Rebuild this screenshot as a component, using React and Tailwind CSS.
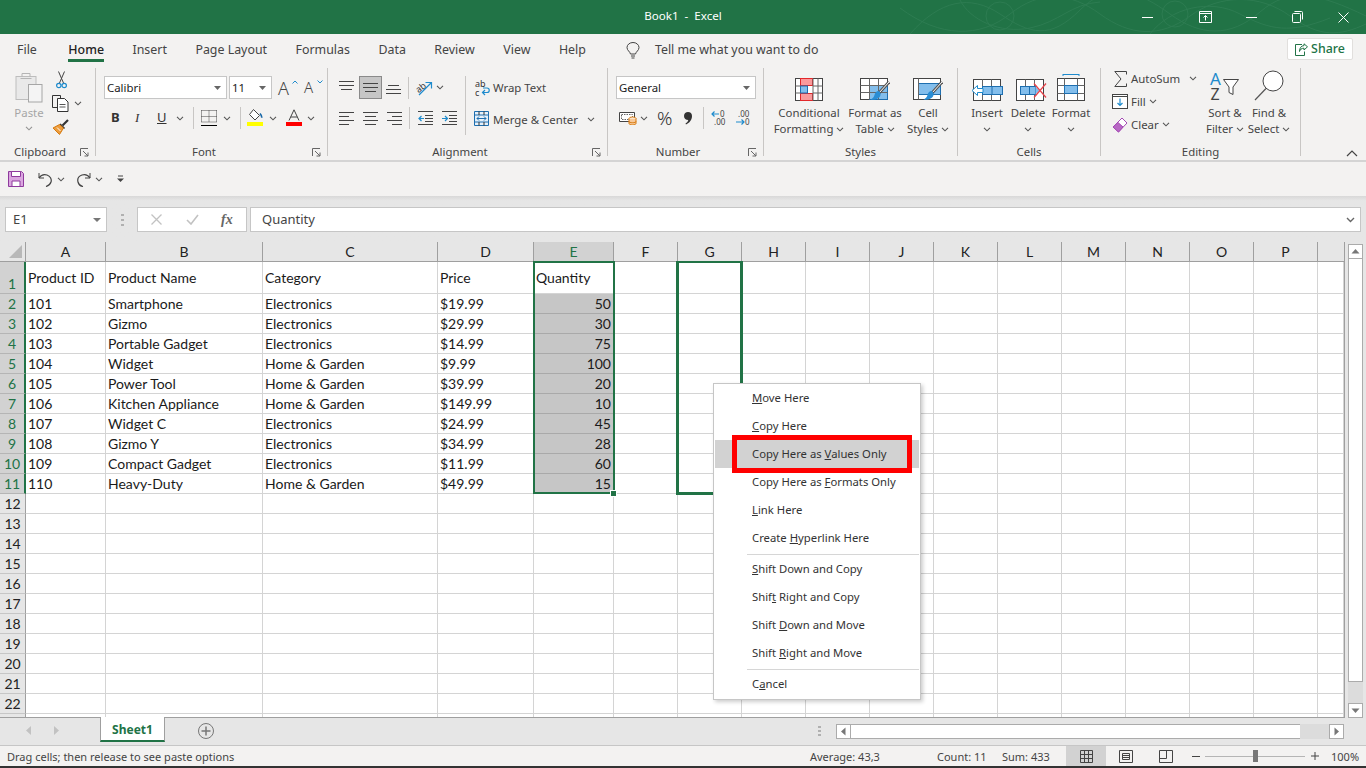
import React from "react";

const DARK = "#444444";
const BLUE = "#1e8bcd";

const tabs = ["File", "Home", "Insert", "Page Layout", "Formulas", "Data", "Review", "View", "Help"];
const columns = ["A", "B", "C", "D", "E", "F", "G", "H", "I", "J", "K", "L", "M", "N", "O", "P", ""];
const gridCols =
  "grid grid-cols-[26px_80px_157px_175px_96px_80px_64px_64px_64px_64px_64px_64px_64px_64px_64px_64px_64px_26px]";

const data = [
  ["Product ID", "Product Name", "Category", "Price", "Quantity"],
  ["101", "Smartphone", "Electronics", "$19.99", "50"],
  ["102", "Gizmo", "Electronics", "$29.99", "30"],
  ["103", "Portable Gadget", "Electronics", "$14.99", "75"],
  ["104", "Widget", "Home & Garden", "$9.99", "100"],
  ["105", "Power Tool", "Home & Garden", "$39.99", "20"],
  ["106", "Kitchen Appliance", "Home & Garden", "$149.99", "10"],
  ["107", "Widget C", "Electronics", "$24.99", "45"],
  ["108", "Gizmo Y", "Electronics", "$34.99", "28"],
  ["109", "Compact Gadget", "Electronics", "$11.99", "60"],
  ["110", "Heavy-Duty", "Home & Garden", "$49.99", "15"],
];

const menuTop = [
  ["", "M", "ove Here"],
  ["", "C", "opy Here"],
  ["Copy Here as ", "V", "alues Only"],
  ["Copy Here as ", "F", "ormats Only"],
  ["", "L", "ink Here"],
  ["Create ", "H", "yperlink Here"],
];
const menuShift = [
  ["", "S", "hift Down and Copy"],
  ["Shif", "t", " Right and Copy"],
  ["Shift ", "D", "own and Move"],
  ["Shift ", "R", "ight and Move"],
];

function Chev({ className = "" }) {
  return (
    <svg width="8" height="5" viewBox="0 0 8 5" className={`shrink-0 ${className}`}>
      <path d="M1 .8l3 3 3-3" fill="none" stroke="#555" strokeWidth="1.1" />
    </svg>
  );
}

function Launcher() {
  return (
    <div className="w-[15px] shrink-0 flex items-center">
      <svg width="9" height="9" viewBox="0 0 9 9">
        <path d="M.5 8V.5H8M3 3l5 5M8 4.5V8H4.5" fill="none" stroke="#666" />
      </svg>
    </div>
  );
}

function GroupLabel({ children, launcher }) {
  return (
    <div className="h-[16px] flex items-center text-[11.4px] text-[#444]">
      <div className="flex-1 text-center leading-[16px]">{children}</div>
      {launcher && <Launcher />}
    </div>
  );
}

function VSep({ className = "" }) {
  return <div className={`w-px h-[22px] bg-[#c8c6c4] shrink-0 ${className}`} />;
}

function Lines({ rows, color = DARK }) {
  return (
    <svg width="15" height="15" viewBox="0 0 15 15" className="shrink-0">
      {rows.map((r, i) => (
        <path key={i} d={`M${r[0]} ${r[2] + 0.5}H${r[1]}`} stroke={color} />
      ))}
    </svg>
  );
}

function Indent({ flip }) {
  return (
    <svg width="15" height="14" viewBox="0 0 15 14" className="shrink-0">
      <path d="M0 .5h15M0 13.5h15M7 4.5h8M7 7.5h8M7 10.5h8" stroke={DARK} />
      <path
        d={flip ? "M0 7.5h5M3 5l2.5 2.5L3 10" : "M6 7.5H1M3.5 5L1 7.5 3.5 10"}
        fill="none"
        stroke={BLUE}
        strokeWidth="1.2"
      />
    </svg>
  );
}

function PasteIcon() {
  return (
    <svg width="28" height="31" viewBox="0 0 28 31">
      <rect x="1" y="4.5" width="20" height="23" fill="#e9e9e9" stroke="#bdbdbd" />
      <path d="M7 4.5V1.5h8v3M5.5 6.5h11" fill="none" stroke="#b5b5b5" />
      <rect x="13.5" y="12.5" width="13.5" height="17.5" fill="#f4f4f4" stroke="#a6a6a6" />
    </svg>
  );
}

function ScissorsIcon() {
  return (
    <svg width="11" height="18" viewBox="0 0 11 18">
      <path d="M2.5 .5L7.5 12M8.5 .5L3.5 12" fill="none" stroke={DARK} />
      <circle cx="2.8" cy="14.5" r="2.2" fill="none" stroke={BLUE} strokeWidth="1.2" />
      <circle cx="8.2" cy="14.5" r="2.2" fill="none" stroke={BLUE} strokeWidth="1.2" />
    </svg>
  );
}

function CopyIcon() {
  return (
    <svg width="17" height="17" viewBox="0 0 17 17">
      <path d="M5.5 12.5H.5V.5h8v3" fill="none" stroke="#333" />
      <path d="M5.5 3.5h7l3.5 3.5v9.5H5.5z" fill="#fff" stroke="#333" />
      <path d="M7.5 9.5h6M7.5 12h6" stroke="#555" />
    </svg>
  );
}

function PainterIcon() {
  return (
    <svg width="17" height="16" viewBox="0 0 17 16">
      <path d="M16 1l-5.5 5.5" stroke="#333" strokeWidth="2.2" />
      <path d="M8 5l4.5 4.5" stroke="#333" strokeWidth="1.6" />
      <path d="M7.5 5.5L1 9l6.5 6.5L11.5 9z" fill="#ed9c3c" stroke="#d47a10" />
      <path d="M5 8.5l3.5 3.5" stroke="#fff" />
    </svg>
  );
}

function BordersIcon() {
  return (
    <svg width="16" height="16" viewBox="0 0 16 16">
      <path
        d="M.5 .5h15M.5 6.5h15M.5 12h15M.5 .5v12M8 .5v12M15.5 .5v12"
        fill="none"
        stroke="#444"
        strokeDasharray="1 1"
      />
      <path d="M0 15.5h16" stroke="#000" />
    </svg>
  );
}

function FillIcon() {
  return (
    <svg width="16" height="18" viewBox="0 0 16 18">
      <path d="M6.5 .5l6 6-4.5 4.5-5.5-5.5z" fill="#fff" stroke="#444" />
      <path d="M13 4.5c1.4 1.7 2 3 1.6 4.2" fill="none" stroke="#1767a8" strokeWidth="1.6" />
      <rect x="0" y="13" width="16" height="4" fill="#ffff00" />
    </svg>
  );
}

function FontColorIcon() {
  return (
    <svg width="16" height="18" viewBox="0 0 16 18">
      <path d="M3 11.5L8 .8l5 10.7M4.8 8h6.4" fill="none" stroke="#444" />
      <rect x="0" y="13" width="16" height="4" fill="#ff0000" />
    </svg>
  );
}

function OrientationIcon() {
  return (
    <svg width="17" height="16" viewBox="0 0 17 16" className="overflow-visible">
      <text x="0" y="10" fontSize="9" fill="#333" transform="rotate(-38 6 8)" fontFamily="Noto Sans">ab</text>
      <path d="M3 15L15 3M9.5 2.5h6v6" fill="none" stroke={BLUE} strokeWidth="1.2" />
    </svg>
  );
}

function WrapIcon() {
  return (
    <svg width="15" height="16" viewBox="0 0 15 16" className="overflow-visible">
      <text x="0" y="7" fontSize="9" fill="#333" fontFamily="Noto Sans">ab</text>
      <text x="0" y="15.5" fontSize="9" fill="#333" fontFamily="Noto Sans">c</text>
      <path d="M8 12.5h4c3 0 3-4.5 0-4.5H8M10 10l-2.5 2.5 2.5 2.5" fill="none" stroke={BLUE} strokeWidth="1.2" />
    </svg>
  );
}

function MergeIcon() {
  return (
    <svg width="15" height="15" viewBox="0 0 15 15">
      <path d="M.5 .5h14v14H.5zM.5 4h14M.5 11h14" fill="#e5f1fb" stroke="#1e6fb0" />
      <path d="M5 .5V4M10 .5V4M5 11v3.5M10 11v3.5" stroke="#333" />
      <path d="M3 7.5h9M5 5.5l-2 2 2 2M10 5.5l2 2-2 2" fill="none" stroke="#1e6fb0" />
    </svg>
  );
}

function AccountingIcon() {
  return (
    <svg width="18" height="14" viewBox="0 0 18 14">
      <path d="M.5 1.5h15v9H.5z" fill="#fff" stroke="#444" />
      <path d="M2.5 3.5h11v5h-11z" fill="none" stroke="#666" strokeDasharray="1.5 1" />
      <ellipse cx="13.5" cy="7.5" rx="3.5" ry="1.5" fill="#fff" stroke="#d87a0e" />
      <path d="M10 7.5v5c0 1.8 7 1.8 7 0v-5" fill="#f7c99a" stroke="#d87a0e" />
      <path d="M10 10.5c0 1.6 7 1.6 7 0" fill="none" stroke="#d87a0e" />
    </svg>
  );
}

function CommaIcon() {
  return (
    <svg width="8" height="13" viewBox="0 0 8 13">
      <path d="M4 0c2.5 0 4 1.6 4 4 0 3.8-2.5 7-6 8.5L1.5 11.500C3 10.5 4 9.5 4.3 8 1.800 8 0 6.5 0 4 0 1.600 1.800 0 4 0z" fill="#333" />
    </svg>
  );
}

function DecimalIcon({ more }) {
  return (
    <svg width="16" height="16" viewBox="0 0 16 16" className="overflow-visible">
      {more ? (
        <>
          <text x="9" y="7" fontSize="8" fill="#444" fontFamily="Noto Sans">0</text>
          <text x="3" y="15" fontSize="8" fill="#444" fontFamily="Noto Sans">.00</text>
          <path d="M8 4H1M3.5 1.5L1 4l2.5 2.5" fill="none" stroke={BLUE} strokeWidth="1.2" />
        </>
      ) : (
        <>
          <text x="3" y="7" fontSize="8" fill="#444" fontFamily="Noto Sans">.00</text>
          <text x="10" y="15" fontSize="8" fill="#444" fontFamily="Noto Sans">0</text>
          <path d="M1 12h8M6.5 9.5L9 12l-2.500 2.500" fill="none" stroke={BLUE} strokeWidth="1.2" />
        </>
      )}
    </svg>
  );
}

function TableBase({ children, w = 28 }) {
  return (
    <svg width={w} height="23" viewBox={`0 0 ${w} 23`}>
      {children}
    </svg>
  );
}

function CondFormatIcon() {
  return (
    <TableBase>
      <rect x=".5" y=".5" width="27" height="22" fill="#fff" stroke="#444" />
      <rect x="5.5" y=".5" width="12" height="7" fill="#fa9a9c" stroke="#e2272a" />
      <rect x="5.5" y="15.5" width="12" height="7" fill="#fa9a9c" stroke="#e2272a" />
      <rect x="5.5" y="8" width="7" height="7" fill="#83beec" stroke="#1e6fb0" />
      <path d="M.5 8h5M.5 15h5M18 8h9.5M18 15h9.5M18 .5v22M23 .5v22" stroke="#666" />
    </TableBase>
  );
}

function Brush() {
  return (
    <>
      <path d="M29 4L19 15" stroke="#555" strokeWidth="3" />
      <path d="M29 4L19 15" stroke="#fff" strokeWidth="1" />
      <path d="M19 13c-3 0-4 2-4.5 4-.5 2-2 3.5-4 4.5 4 .8 8-.5 9.5-3 .8-1.5 1-3.5-1-5.5z" fill="#2a8dd4" />
    </>
  );
}

function FormatTableIcon() {
  return (
    <TableBase w={30}>
      <rect x=".5" y=".5" width="27" height="21" fill="#fff" stroke="#444" />
      <rect x="9.5" y="7.5" width="18" height="14" fill="#83beec" stroke="#1e6fb0" />
      <path d="M.5 7.5h27M.5 14.5h27M9.5 .5v21M18.5 .5v21" stroke="#666" />
      <Brush />
    </TableBase>
  );
}

function CellStylesIcon() {
  return (
    <TableBase w={30}>
      <rect x=".5" y=".5" width="27" height="21" fill="#fff" stroke="#444" />
      <rect x="5.5" y="5.5" width="22" height="11" fill="#83beec" stroke="#1e6fb0" />
      <path d="M5.5 .5v21" stroke="#666" />
      <Brush />
    </TableBase>
  );
}

function InsertIcon() {
  return (
    <svg width="32" height="22" viewBox="0 0 32 22">
      <rect x="2.5" y=".5" width="27" height="21" fill="#fff" stroke="#444" />
      <path d="M11.5 .5v21M20.5 .5v21" stroke="#666" />
      <rect x="11.5" y="7.5" width="20" height="8" fill="#83beec" stroke="#1e6fb0" />
      <path d="M21 7.5v8" stroke="#1e6fb0" />
      <path d="M12 9.5H6.5V6.5L1 11.5l5.5 5v-3H12z" fill="#fff" stroke={BLUE} />
    </svg>
  );
}

function DeleteIcon() {
  return (
    <svg width="31" height="22" viewBox="0 0 31 22">
      <rect x=".5" y=".5" width="27" height="21" fill="#fff" stroke="#444" />
      <path d="M9.5 .5v21M18.5 .5v21" stroke="#666" />
      <rect x="4.5" y="7.5" width="15" height="8" fill="#83beec" stroke="#1e6fb0" />
      <path d="M13.5 7.5v8" stroke="#1e6fb0" />
      <path d="M19.5 7.5l4 4-4 4z" fill="#83beec" />
      <path d="M18 4.5l12 14M30 4.5l-12 14" stroke="#e8434a" strokeWidth="1.2" />
    </svg>
  );
}

function FormatIcon() {
  return (
    <svg width="28" height="27" viewBox="0 0 28 27">
      <path d="M6 .5h16M6 0v2M22 0v2" stroke={BLUE} />
      <rect x=".5" y="4.5" width="27" height="22" fill="#fff" stroke="#444" />
      <path d="M.5 11.5h27M.5 19.5h27M7.5 4.5v22M20.5 4.5v22" stroke="#666" />
      <rect x="7.5" y="11.5" width="13" height="8" fill="#83beec" stroke="#1e6fb0" />
    </svg>
  );
}

function SigmaIcon() {
  return (
    <svg width="13" height="16" viewBox="0 0 13 16">
      <path d="M12.5 3.5V.5H.8L7 8l-6.2 7.5h11.7v-3" fill="none" stroke="#444" />
    </svg>
  );
}

function FillDownIcon() {
  return (
    <svg width="16" height="15" viewBox="0 0 16 15">
      <rect x=".5" y=".5" width="15" height="14" fill="#fff" stroke="#444" />
      <path d="M.5 2.500h15" stroke="#444" />
      <path d="M8 4.5v7M5.5 9L8 11.5 10.5 9" fill="none" stroke={BLUE} strokeWidth="1.2" />
    </svg>
  );
}

function EraserIcon() {
  return (
    <svg width="16" height="16" viewBox="0 0 16 16">
      <path d="M10 1l5 5-8.5 9L1 10z" fill="#fff" stroke="#a54ab5" />
      <path d="M6 5.5l-5 4.5 5.5 5 4.5-5z" fill="#b768c4" stroke="#a54ab5" />
    </svg>
  );
}

function SortIcon() {
  return (
    <svg width="30" height="30" viewBox="0 0 30 30" className="overflow-visible">
      <text x="0" y="14" fontSize="17" fill={BLUE} fontFamily="Noto Sans">A</text>
      <text x="0.5" y="29" fontSize="16" fill="#444" fontFamily="Noto Sans">Z</text>
      <path d="M13.5 8.5h15L23 16v7.5l-4-2V16z" fill="#fff" stroke="#444" />
    </svg>
  );
}

function FindIcon() {
  return (
    <svg width="30" height="31" viewBox="0 0 30 31">
      <circle cx="19" cy="11" r="10" fill="#fff" stroke="#444" />
      <path d="M12 18.5L1 30" stroke="#555" strokeWidth="1.2" />
    </svg>
  );
}

function BigBtn({ icon, lines, width }) {
  return (
    <div className={`flex flex-col items-center shrink-0 ${width}`}>
      <div className="h-[31px] mt-[4px] flex items-end justify-center">{icon}</div>
      <div className="mt-[4px] h-[16px] leading-[16px] whitespace-nowrap flex items-center">{lines[0]}</div>
      <div className="h-[16px] leading-[16px] whitespace-nowrap flex items-center justify-center">
        {lines[1]}
        <Chev className={lines[1] ? "ml-[3px]" : ""} />
      </div>
    </div>
  );
}

function Combo({ children, width }) {
  return (
    <div className={`h-[23px] bg-white border border-[#c6c6c6] flex items-center justify-between pl-[2px] pr-[5px] text-[11.4px] text-[#222] shrink-0 ${width}`}>
      <span>{children}</span>
      <svg width="7" height="4" viewBox="0 0 7 4">
        <path d="M0 0h7L3.5 4z" fill="#666" />
      </svg>
    </div>
  );
}

function Ribbon() {
  return (
    <div className="h-[96px] flex text-[11.4px] text-[#444] border-b-2 border-[#d4d4d4] bg-[#f3f2f1]">
      {/* Clipboard */}
      <div className="w-[95px] shrink-0 flex flex-col">
        <div className="h-[78px] flex">
          <div className="ml-[15px] w-[28px] pt-[6px] flex flex-col items-center">
            <PasteIcon />
            <div className="mt-[2px] h-[16px] leading-[16px] text-[#a6a6a6]">Paste</div>
            <Chev className="mt-[5px] opacity-60" />
          </div>
          <div className="ml-[9px] pt-[5px] flex flex-col">
            <div className="h-[18px] pl-[4px]"><ScissorsIcon /></div>
            <div className="mt-[6px] h-[17px] flex items-center">
              <CopyIcon />
              <Chev className="ml-[5px]" />
            </div>
            <div className="mt-[7px] h-[16px]"><PainterIcon /></div>
          </div>
        </div>
        <GroupLabel launcher>Clipboard</GroupLabel>
      </div>
      <div className="w-px h-[88px] mt-[2px] bg-[#c8c6c4] shrink-0" />

      {/* Font */}
      <div className="w-[231px] shrink-0 flex flex-col">
        <div className="h-[78px] pt-[10px]">
          <div className="flex items-center h-[23px] pl-[8px]">
            <Combo width="w-[123px]">Calibri</Combo>
            <Combo width="w-[43px] ml-[2px]">11</Combo>
            <div className="ml-[6px] w-[18px] relative text-[18px] font-light text-[#444] leading-none">
              A<svg width="6" height="4" viewBox="0 0 6 4" className="absolute right-[-2px] top-[1px]"><path d="M.5 3.5L3 1l2.5 2.5" fill="none" stroke={BLUE} /></svg>
            </div>
            <div className="ml-[8px] w-[16px] relative text-[15px] font-light text-[#444] leading-none">
              A<svg width="6" height="4" viewBox="0 0 6 4" className="absolute right-[-3px] top-[0px]"><path d="M.5 .5L3 3l2.5-2.5" fill="none" stroke={BLUE} /></svg>
            </div>
          </div>
          <div className="flex items-center h-[22px] mt-[8px] pl-[15px]">
            <span className="w-[9px] font-bold text-[13px] text-[#333]">B</span>
            <span className="ml-[15px] w-[8px] italic text-[13px] text-[#333] [font-family:'Liberation_Serif',serif]">I</span>
            <span className="ml-[14px] w-[10px] underline text-[13px] text-[#333]">U</span>
            <Chev className="ml-[9px]" />
            <VSep className="ml-[9px]" />
            <div className="ml-[7px]"><BordersIcon /></div>
            <Chev className="ml-[6px]" />
            <VSep className="ml-[9px]" />
            <div className="ml-[6px]"><FillIcon /></div>
            <Chev className="ml-[6px]" />
            <div className="ml-[9px]"><FontColorIcon /></div>
            <Chev className="ml-[5px]" />
          </div>
        </div>
        <GroupLabel launcher>Font</GroupLabel>
      </div>
      <div className="w-px h-[88px] mt-[2px] bg-[#c8c6c4] shrink-0" />

      {/* Alignment */}
      <div className="w-[279px] shrink-0 flex flex-col">
        <div className="h-[78px] pt-[10px] flex">
          <div className="pl-[11px] w-[137px]">
            <div className="flex items-center h-[23px]">
              <Lines rows={[[0, 15, 1], [0, 15, 5], [2, 13, 9]]} />
              <div className="ml-[5px] w-[23px] h-[23px] bg-[#c6c6c6] border border-[#8a8a8a] flex items-center justify-center">
                <Lines rows={[[0, 15, 3], [0, 15, 7], [2, 13, 11]]} />
              </div>
              <div className="ml-[4px]"><Lines rows={[[2, 13, 5], [0, 15, 9], [0, 15, 13]]} /></div>
              <VSep className="ml-[7px]" />
              <div className="ml-[7px]"><OrientationIcon /></div>
              <Chev className="ml-[3px]" />
            </div>
            <div className="flex items-center h-[22px] mt-[8px]">
              <Lines rows={[[0, 15, 1], [0, 10, 5], [0, 15, 9], [0, 10, 13]]} />
              <div className="ml-[9px]"><Lines rows={[[0, 15, 1], [2, 13, 5], [0, 15, 9], [2, 13, 13]]} /></div>
              <div className="ml-[9px]"><Lines rows={[[0, 15, 1], [5, 15, 5], [0, 15, 9], [5, 15, 13]]} /></div>
              <VSep className="ml-[7px]" />
              <div className="ml-[8px]"><Indent /></div>
              <div className="ml-[9px]"><Indent flip /></div>
            </div>
          </div>
          <div className="w-px h-[59px] bg-[#c8c6c4] shrink-0" />
          <div className="pl-[8px]">
            <div className="h-[23px] flex items-center pl-[1px]">
              <WrapIcon />
              <span className="ml-[3px] whitespace-nowrap">Wrap Text</span>
            </div>
            <div className="h-[22px] mt-[8px] flex items-center">
              <MergeIcon />
              <span className="ml-[4px] pt-[3px] whitespace-nowrap">Merge &amp; Center</span>
              <Chev className="ml-[9px] mt-[2px]" />
            </div>
          </div>
        </div>
        <GroupLabel launcher>Alignment</GroupLabel>
      </div>
      <div className="w-px h-[88px] mt-[2px] bg-[#c8c6c4] shrink-0" />

      {/* Number */}
      <div className="w-[155px] shrink-0 flex flex-col">
        <div className="h-[78px] pt-[10px]">
          <div className="pl-[8px] h-[23px]">
            <Combo width="w-[140px]">General</Combo>
          </div>
          <div className="flex items-center h-[22px] mt-[8px] pl-[11px]">
            <AccountingIcon />
            <Chev className="ml-[3px]" />
            <span className="ml-[9px] text-[19px] font-light leading-none text-[#333]">%</span>
            <div className="ml-[12px]"><CommaIcon /></div>
            <VSep className="ml-[11px]" />
            <div className="ml-[7px]"><DecimalIcon more /></div>
            <div className="ml-[8px]"><DecimalIcon /></div>
          </div>
        </div>
        <GroupLabel launcher>Number</GroupLabel>
      </div>
      <div className="w-px h-[88px] mt-[2px] bg-[#c8c6c4] shrink-0" />

      {/* Styles */}
      <div className="w-[193px] shrink-0 flex flex-col">
        <div className="h-[78px] flex pl-[10px]">
          <BigBtn width="w-[70px]" icon={<CondFormatIcon />} lines={["Conditional", "Formatting"]} />
          <BigBtn width="w-[62px]" icon={<FormatTableIcon />} lines={["Format as", "Table"]} />
          <BigBtn width="w-[44px]" icon={<CellStylesIcon />} lines={["Cell", "Styles"]} />
        </div>
        <GroupLabel>Styles</GroupLabel>
      </div>
      <div className="w-px h-[88px] mt-[2px] bg-[#c8c6c4] shrink-0" />

      {/* Cells */}
      <div className="w-[142px] shrink-0 flex flex-col">
        <div className="h-[78px] flex pl-[8px]">
          <BigBtn width="w-[42px]" icon={<InsertIcon />} lines={["Insert", ""]} />
          <BigBtn width="w-[40px]" icon={<div className="ml-[6px]"><DeleteIcon /></div>} lines={["Delete", ""]} />
          <BigBtn width="w-[46px]" icon={<FormatIcon />} lines={["Format", ""]} />
        </div>
        <GroupLabel>Cells</GroupLabel>
      </div>
      <div className="w-px h-[88px] mt-[2px] bg-[#c8c6c4] shrink-0" />

      {/* Editing */}
      <div className="w-[199px] shrink-0 flex flex-col">
        <div className="h-[78px] flex">
          <div className="w-[102px] shrink-0 pt-[1px] pl-[11px]">
            <div className="h-[23px] flex items-center">
              <div className="w-[19px] pl-[2px]"><SigmaIcon /></div>
              <span>AutoSum</span>
              <Chev className="ml-[9px]" />
            </div>
            <div className="h-[23px] flex items-center">
              <div className="w-[19px]"><FillDownIcon /></div>
              <span>Fill</span>
              <Chev className="ml-[3px]" />
            </div>
            <div className="h-[23px] flex items-center">
              <div className="w-[19px]"><EraserIcon /></div>
              <span>Clear</span>
              <Chev className="ml-[3px]" />
            </div>
          </div>
          <BigBtn width="w-[44px]" icon={<SortIcon />} lines={["Sort &", "Filter"]} />
          <BigBtn width="w-[44px]" icon={<FindIcon />} lines={["Find &", "Select"]} />
        </div>
        <GroupLabel>Editing</GroupLabel>
      </div>
      <div className="w-px h-[88px] mt-[2px] bg-[#c8c6c4] shrink-0" />

      <div className="flex-1 flex items-end justify-end pb-[3px] pr-[8px]">
        <svg width="12" height="7" viewBox="0 0 12 7">
          <path d="M1 6l5-5 5 5" fill="none" stroke="#444" strokeWidth="1.2" />
        </svg>
      </div>
    </div>
  );
}

function TitleBar() {
  return (
    <div className="relative h-[34px] bg-[#217346] grid grid-cols-[1fr_auto_1fr] items-center text-white text-[11.6px] overflow-hidden">
      <svg width="466" height="34" viewBox="0 0 466 34" className="absolute right-0 top-0 opacity-40" fill="none" stroke="#3f8a63">
        <path d="M10 34C40 0 70 -6 100 14S150 40 180 10 240-8 270 14 330 38 360 12 420-6 466 16" />
        <path d="M0 8c40 30 80 30 110 6S170-8 200 14s60 24 90 2 70-22 100 0 50 20 76 8" />
        <path d="M60 0c10 20 40 34 70 28s40-24 70-26M250 34c20-26 60-36 90-20s50 20 90 4" />
        <circle cx="100" cy="16" r="14" />
        <circle cx="275" cy="14" r="13" />
      </svg>
      <div />
      <div className="relative whitespace-pre pb-[2px]">Book1  -  Excel</div>
      <div className="relative flex justify-end items-center h-full">
        <div className="w-[46px] flex justify-center">
          <svg width="11" height="1" viewBox="0 0 11 1"><path d="M0 .5h11" stroke="#fff" /></svg>
        </div>
        <div className="w-[46px] ml-[12px] flex justify-center">
          <svg width="13" height="12" viewBox="0 0 13 12" fill="none" stroke="#fff">
            <path d="M.5 .5h12v11H.5zM.5 2.5h12M6.5 9.5v-5M4.5 6.5l2-2 2 2" />
          </svg>
        </div>
        <div className="w-[46px] flex justify-center">
          <svg width="11" height="1" viewBox="0 0 11 1"><path d="M0 .5h11" stroke="#fff" /></svg>
        </div>
        <div className="w-[46px] flex justify-center">
          <svg width="11" height="12" viewBox="0 0 11 12" fill="none" stroke="#fff">
            <rect x=".5" y="2.5" width="8" height="9" rx="1" />
            <path d="M2.5 .5h7a1 1 0 0 1 1 1v7" />
          </svg>
        </div>
        <div className="w-[46px] flex justify-center">
          <svg width="11" height="11" viewBox="0 0 11 11"><path d="M.5 .5l10 10M10.500 .5l-10 10" stroke="#fff" /></svg>
        </div>
      </div>
    </div>
  );
}

function TabBar() {
  return (
    <div className="h-[32px] flex items-start bg-[#f3f2f1] text-[12.4px] text-[#444] pl-[17px] pr-[13px]">
      <div className="flex gap-[28.5px]">
        {tabs.map((t) => (
          <div
            key={t}
            className={`h-[28px] pt-[7px] flex items-center border-b-[3px] whitespace-nowrap first:mr-[3px] ${
              t === "Home" ? "border-[#217346] text-[#222] font-medium" : "border-transparent"
            }`}
          >
            {t}
          </div>
        ))}
      </div>
      <div className="ml-[40px] h-[28px] pt-[4px] flex items-center">
        <svg width="14" height="17" viewBox="0 0 14 17" fill="none" stroke="#444">
          <path d="M4.500 12C4 9.500 1 8.500 1 5.500a6 5 0 0 1 12 0c0 3-3 4-3.500 6.500zM5 14h4M5.500 16h3" />
        </svg>
        <span className="ml-[15px] whitespace-nowrap">Tell me what you want to do</span>
      </div>
      <div className="ml-auto mt-[4px] w-[66px] h-[22px] bg-white border border-[#e1dfdd] rounded-[2px] flex items-center justify-center text-[#217346] font-medium">
        <svg width="13" height="13" viewBox="0 0 13 13" fill="none" stroke="#217346" className="mr-[3px]">
          <path d="M9 .8l3.5 3L9 7V5.2C6.5 5.2 5 6.5 4.5 8.500 4.5 5 6 2.800 9 2.600zM7 1.500H.5v11h9V8.500" />
        </svg>
        Share
      </div>
    </div>
  );
}

function QuickAccess() {
  return (
    <div className="h-[34px] flex items-center pl-[8px] bg-[#f3f2f1]">
      <svg width="16" height="16" viewBox="0 0 16 16">
        <path d="M.5 .5h13l2 2v13H.5z" fill="#dba6e0" stroke="#8e3a9d" />
        <path d="M3.5 .5h9v5h-9zM4 10h8v5.5H4z" fill="#fff" stroke="#8e3a9d" />
      </svg>
      <svg width="15" height="16" viewBox="0 0 15 16" fill="none" stroke="#444" className="ml-[14px]">
        <path d="M1 2v5h5" />
        <path d="M1 7c2-3 5-4 8-3s5 4 4 7-3 4-5 4.5" strokeWidth="1.2" />
      </svg>
      <Chev className="ml-[4px]" />
      <svg width="15" height="16" viewBox="0 0 15 16" fill="none" stroke="#444" className="ml-[11px]">
        <path d="M14 2v5H9" />
        <path d="M14 7c-2-3-5-4-8-3S1 7 2 11s3 4 5 4.5" strokeWidth="1.2" />
      </svg>
      <Chev className="ml-[4px]" />
      <svg width="7" height="8" viewBox="0 0 7 8" className="ml-[14px]">
        <path d="M1 1h5" stroke="#444" />
        <path d="M0 3.5h7L3.5 7z" fill="#444" />
      </svg>
    </div>
  );
}

function FormulaBar() {
  return (
    <div className="h-[46px] pt-[11px] flex items-start text-[13px] text-[#444] bg-linear-to-b from-[#d8d8d8] from-0% to-[#e6e6e6] to-[10%]">
      <div className="ml-[5px] w-[102px] h-[25px] bg-white border border-[#c6c6c6] flex items-center justify-between pl-[7px] pr-[5px]">
        E1
        <svg width="8" height="4" viewBox="0 0 8 4"><path d="M0 0h8L4 4z" fill="#777" /></svg>
      </div>
      <div className="ml-[14px] w-[3px] h-[25px] flex flex-col justify-center gap-[3px]">
        <div className="h-[2px] bg-[#b0b0b0]" />
        <div className="h-[2px] bg-[#b0b0b0]" />
        <div className="h-[2px] bg-[#b0b0b0]" />
      </div>
      <div className="ml-[13px] w-[110px] h-[25px] bg-white border border-[#c6c6c6] flex items-center">
        <svg width="11" height="11" viewBox="0 0 11 11" className="ml-[13px]"><path d="M.5 .5l10 10M10.500 .5l-10 10" stroke="#c2c2c2" strokeWidth="1.3" /></svg>
        <svg width="13" height="11" viewBox="0 0 13 11" className="ml-[24px]"><path d="M1 6l4 4 7-9" fill="none" stroke="#c2c2c2" strokeWidth="1.6" /></svg>
        <span className="ml-[22px] italic text-[#666] [font-family:'Liberation_Serif',serif] text-[14px] font-bold">fx</span>
      </div>
      <div className="ml-[3px] w-[1111px] h-[25px] bg-white border border-[#c6c6c6] flex items-center justify-between pl-[11px] pr-[5px]">
        Quantity
        <svg width="9" height="6" viewBox="0 0 9 6"><path d="M1 1l3.5 3.5L8 1" fill="none" stroke="#666" strokeWidth="1.4" /></svg>
      </div>
    </div>
  );
}

function ColumnHeaders() {
  return (
    <div className={`${gridCols} h-[20px] bg-[#e6e6e6] text-[14px] leading-[18px] [font-family:'Lato',sans-serif]`}>
      <div className="border-r border-b border-[#9f9f9f] flex items-end justify-end pr-[3px] pb-[3px]">
        <svg width="13" height="13" viewBox="0 0 13 13"><path d="M13 0v13H0z" fill="#b8b8b8" /></svg>
      </div>
      {columns.map((c, i) => (
        <div
          key={i}
          className={`border-b border-[#9f9f9f] flex items-center justify-center ${
            c ? "border-r" : ""
          } ${c === "E" ? "bg-[#d2d2d2] text-[#217346]" : "text-[#222]"}`}
        >
          {c}
        </div>
      ))}
    </div>
  );
}

function SheetRow({ index, cells }) {
  const selected = index <= 11;
  const first = index === 1;
  return (
    <div className={`${gridCols} ${first ? "h-[32px]" : "h-[20px]"} text-[14px] leading-[18px] text-[#1a1a1a] [font-family:'Lato',sans-serif]`}>
      <div
        className={`flex justify-center border-b ${first ? "items-end" : "items-center"} ${
          selected
            ? "bg-[#d2d2d2] text-[#217346] border-b-[#b5b5b5] border-r-2 border-r-[#217346]"
            : "bg-[#e6e6e6] text-[#222] border-b-[#c6c6c6] border-r border-r-[#9f9f9f]"
        }`}
      >
        {index < 23 ? index : ""}
      </div>
      {columns.map((_, i) => {
        const value = cells ? cells[i] : undefined;
        const quantity = i === 4 && index > 1 && index <= 11;
        return (
          <div
            key={i}
            className={`border-b border-r flex items-center whitespace-nowrap pl-[2px] ${
              quantity
                ? "bg-[#c6c6c6] border-b-[#a9a9a9] border-r-[#c6c6c6] justify-end pr-[2px]"
                : "bg-white border-[#d4d4d4]"
            }`}
          >
            {value}
          </div>
        );
      })}
    </div>
  );
}

function MenuItem({ item, active }) {
  return (
    <div className={`relative h-[28px] flex items-center pl-[37px] mx-px whitespace-pre ${active ? "bg-[#d2d2d2]" : ""}`}>
      <span className="pt-px">
        {item[0]}
        <u>{item[1]}</u>
        {item[2]}
      </span>
      {active && <div className="absolute left-[17px] top-[-5px] w-[180px] h-[38px] border-[5px] border-[#ff0000]" />}
    </div>
  );
}

function ContextMenu() {
  return (
    <div className="absolute left-[713px] top-[141px] w-[208px] pb-px bg-white border border-[#c6c6c6] shadow-[2px_2px_4px_rgba(0,0,0,0.2)] text-[11.3px] text-[#333] [font-family:'Noto_Sans',sans-serif]">
      {menuTop.map((m, i) => (
        <MenuItem key={i} item={m} active={i === 2} />
      ))}
      <div className="h-[3px] pt-[2px] pl-[33px] pr-px"><div className="h-px bg-[#d6d6d6]" /></div>
      {menuShift.map((m, i) => (
        <MenuItem key={i} item={m} />
      ))}
      <div className="h-[3px] pt-[2px] pl-[33px] pr-px"><div className="h-px bg-[#d6d6d6]" /></div>
      <MenuItem item={["C", "a", "ncel"]} />
    </div>
  );
}

function ScrollBtn({ d, className = "" }) {
  return (
    <div className={`w-[15px] h-[15px] bg-white border border-[#ababab] flex items-center justify-center shrink-0 ${className}`}>
      <svg width="9" height="9" viewBox="0 0 9 9"><path d={d} fill="#777" /></svg>
    </div>
  );
}

function Sheet() {
  const rows = [];
  for (let i = 1; i <= 23; i++) rows.push(i);
  return (
    <div className="h-[476px] flex bg-[#e6e6e6]">
      <div className="relative w-[1345px] h-[476px] overflow-hidden border-r border-b border-[#9f9f9f]">
        <ColumnHeaders />
        {rows.map((i) => (
          <SheetRow key={i} index={i} cells={data[i - 1]} />
        ))}
        {/* selected range */}
        <div className="absolute left-[533px] top-[19px] w-[82px] h-[233px] border-2 border-[#217346]" />
        <div className="absolute left-[611px] top-[249px] w-[5px] h-[5px] bg-[#217346] outline outline-white" />
        {/* range being dragged */}
        <div className="absolute left-[676px] top-[19px] w-[67px] h-[234px] border-x-[3px] border-b-[3px] border-t-2 border-[#217346]" />
        <ContextMenu />
      </div>
      <div className="ml-[3px] w-[15px] pt-[2px] flex flex-col h-[476px]">
        <ScrollBtn d="M.5 6.5L4.5 2l4 4.5z" />
        <div className="h-[423px] w-[15px] bg-white border-x border-b border-[#ababab] shrink-0" />
        <div className="h-[21px] bg-[#dcdcdc] shrink-0" />
        <ScrollBtn d="M.5 2.5l4 4.5 4-4.5z" />
      </div>
    </div>
  );
}

function SheetTabs() {
  return (
    <div className="h-[27px] bg-[#e6e6e6] flex items-start relative">
      <div className="w-[100px] h-[25px] flex items-center pl-[26px] gap-[22px]">
        <svg width="6" height="9" viewBox="0 0 6 9"><path d="M5 0v9L0 4.5z" fill="#c2c2c2" /></svg>
        <svg width="6" height="9" viewBox="0 0 6 9"><path d="M0 0v9l5-4.5z" fill="#c2c2c2" /></svg>
      </div>
      <div className="w-[65px] h-[25px] pt-[2px] bg-white border-x border-[#9f9f9f] border-b-2 border-b-[#217346] flex items-center justify-center text-[12px] font-bold text-[#217346] -mt-px">
        Sheet1
      </div>
      <svg width="16" height="16" viewBox="0 0 16 16" className="ml-[33px] mt-[5px]" fill="none" stroke="#777">
        <circle cx="8" cy="8" r="7.5" />
        <path d="M8 3.5v9M3.5 8h9" strokeWidth="1.5" />
      </svg>
      <div className="ml-[604px] mt-[8px] w-[3px] flex flex-col gap-[2px]">
        <div className="h-[2px] bg-[#b0b0b0]" />
        <div className="h-[2px] bg-[#b0b0b0]" />
        <div className="h-[2px] bg-[#b0b0b0]" />
      </div>
      <div className="ml-[15px] mt-[6px] flex w-[508px] h-[15px]">
        <ScrollBtn d="M6.5 .5L2 4.5l4.5 4z" />
        <div className="w-[449px] bg-white border-y border-[#ababab]" />
        <div className="w-[29px] bg-[#dcdcdc]" />
        <ScrollBtn d="M2.5 .5L7 4.5l-4.5 4z" />
      </div>
    </div>
  );
}

function StatusBar() {
  return (
    <div className="h-[21px] border-t border-[#c6c6c6] bg-[#f3f2f1] flex items-stretch text-[11px] text-[#444]">
      <div className="w-[810px] pl-[7px] pt-[2px] flex items-center whitespace-nowrap">Drag cells; then release to see paste options</div>
      <div className="w-[127px] pt-[2px] flex items-center whitespace-nowrap">Average: 43,3</div>
      <div className="w-[65px] pt-[2px] flex items-center whitespace-nowrap">Count: 11</div>
      <div className="w-[64px] pt-[2px] flex items-center whitespace-nowrap">Sum: 433</div>
      <div className="w-[40px] bg-[#d2d2d2] flex items-center justify-center">
        <svg width="13" height="13" viewBox="0 0 13 13" fill="none" stroke="#444">
          <path d="M.5 .5h12v12H.5zM.5 4.5h12M.5 8.5h12M4.5 .5v12M8.5 .5v12" />
        </svg>
      </div>
      <div className="w-[40px] flex items-center justify-center">
        <svg width="14" height="13" viewBox="0 0 14 13" fill="none" stroke="#444">
          <path d="M.5 .5h13v12H.5zM3.5 3.5h7v6h-7zM3.5 5.5h7M3.5 7.5h7" />
        </svg>
      </div>
      <div className="w-[40px] flex items-center justify-center">
        <svg width="14" height="13" viewBox="0 0 14 13" fill="none" stroke="#444">
          <path d="M.5 .5h13v12H.5zM.5 8.5h7M7.5 .5v8" />
        </svg>
      </div>
      <div className="ml-[6px] w-[8px] flex items-center"><div className="w-[8px] h-px bg-[#444]" /></div>
      <div className="ml-[5px] w-[100px] flex items-center relative">
        <div className="w-full h-px bg-[#b5b5b5]" />
        <div className="absolute left-[48px] top-[4px] w-[5px] h-[12px] bg-[#777]" />
      </div>
      <div className="ml-[6px] w-[8px] flex items-center">
        <svg width="8" height="8" viewBox="0 0 8 8"><path d="M4 0v8M0 4h8" stroke="#444" /></svg>
      </div>
      <div className="ml-[12px] pt-[2px] flex items-center">100%</div>
    </div>
  );
}

export default function App() {
  return (
    <div className="w-[1366px] h-[768px] overflow-hidden flex flex-col bg-[#f3f2f1] [font-family:'Noto_Sans',sans-serif]">
      <TitleBar />
      <TabBar />
      <Ribbon />
      <QuickAccess />
      <FormulaBar />
      <Sheet />
      <SheetTabs />
      <StatusBar />
      <div className="h-[2px] bg-[#333] shrink-0" />
    </div>
  );
}
